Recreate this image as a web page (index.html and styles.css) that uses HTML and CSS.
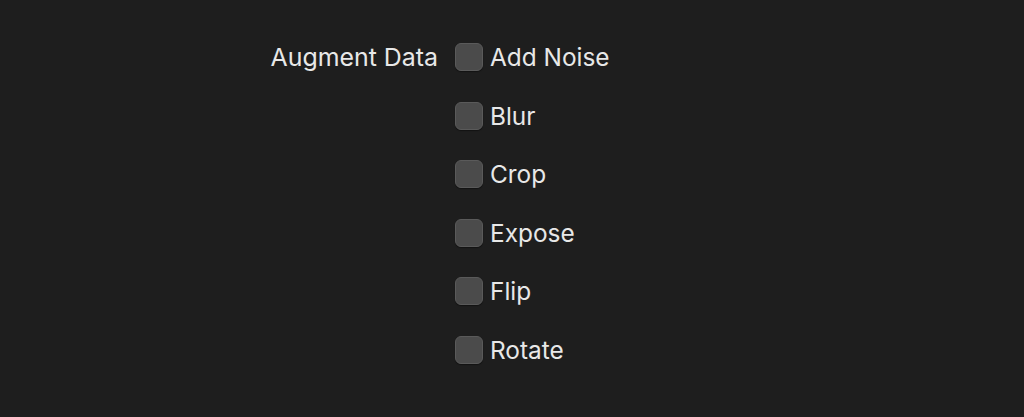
FILE: index.html
```html
<!DOCTYPE html>
<html lang="en">
<head>
  <meta charset="UTF-8">
  <title>Augment Data</title>
  <link rel="stylesheet" href="styles.css">
</head>
<body>
  <div class="form">
    <div class="label">Augment Data</div>
    <ul class="options">
      <li><span class="box"></span><span class="name">Add Noise</span></li>
      <li><span class="box"></span><span class="name">Blur</span></li>
      <li><span class="box"></span><span class="name">Crop</span></li>
      <li><span class="box"></span><span class="name">Expose</span></li>
      <li><span class="box"></span><span class="name">Flip</span></li>
      <li><span class="box"></span><span class="name">Rotate</span></li>
    </ul>
  </div>
</body>
</html>
```

FILE: styles.css
```css
* {
  margin: 0;
  padding: 0;
  list-style-type: none;
}
html, body {
  width: 100%;
  height: 100%;
  background: #1e1e1e;
}
body {
  font-family: Inter, "Noto Sans", sans-serif;
  font-size: 24.4px;
  color: #e8e8e8;
}
.form {
  display: grid;
  grid-template-columns: 438px auto;
  column-gap: 17px;
  padding-top: 43px;
}
.label {
  text-align: right;
  line-height: 28px;
  font-size: 24.9px;
}
.options {
  display: flex;
  flex-direction: column;
  gap: 30.5px;
}
.options li {
  display: flex;
  align-items: center;
  gap: 7px;
  height: 28px;
}
.box {
  box-sizing: border-box;
  width: 28px;
  height: 28px;
  border-radius: 6px;
  background: #4b4b4b;
  border: 1px solid #5a5a5a;
  box-shadow: 0 1px 1px rgba(0, 0, 0, 0.4);
}
.name {
  line-height: 28px;
}
```
